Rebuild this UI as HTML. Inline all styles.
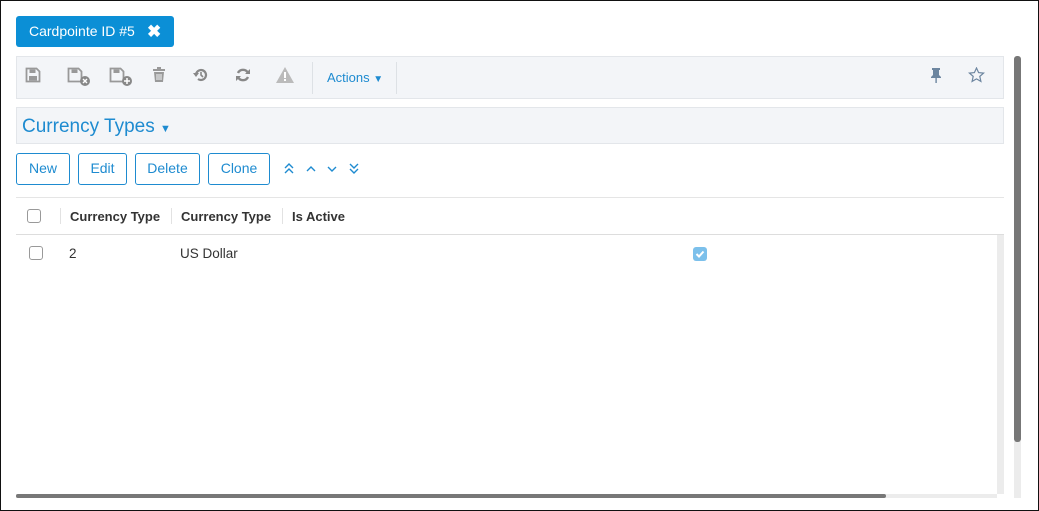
<!DOCTYPE html>
<html><head><meta charset="utf-8"><style>
*{box-sizing:border-box;margin:0;padding:0}
body{width:1039px;height:511px;background:#fff;font-family:"Liberation Sans",Arial,sans-serif;position:relative;overflow:hidden}
.frame{position:absolute;left:0;top:0;width:1039px;height:511px;border:1px solid #111}
.a{position:absolute}
.tab{left:16px;top:16px;width:158px;height:31px;background:#0b8fd6;border-radius:3px;color:#fff;font-size:14px;line-height:31px;padding-left:13px}
.tab span{position:absolute;left:131px;top:0;font-weight:bold;font-size:17px}
.bar{left:16px;top:56px;width:988px;height:43px;background:#f3f5f8;border:1px solid #e3e6ea}
.ico{position:absolute;top:67px}
.sep{position:absolute;top:62px;width:1px;height:32px;background:#dde1e5}
.act{left:327px;top:70px;color:#1e8bd0;font-size:13px}
.hdr{left:16px;top:107px;width:988px;height:37px;background:#f3f5f8;border:1px solid #e3e6ea}
.title{left:22px;top:116px;color:#1e8bd0;font-size:19px}
.btn{position:absolute;top:153px;height:32px;border:1px solid #1e8bd0;border-radius:3px;color:#1e8bd0;font-size:14px;line-height:29px;text-align:center;background:#fff}
.th{position:absolute;top:209px;font-size:13px;font-weight:bold;color:#333}
.td{position:absolute;top:246px;font-size:13.5px;color:#333}
.cb{position:absolute;width:14px;height:14px;border:1px solid #999;border-radius:3px;background:#fff}
.vs{position:absolute;width:1px;height:16px;top:208px;background:#e2e2e2}
</style></head><body>
<div class="frame"></div>
<div class="a tab">Cardpointe ID #5<span>✖</span></div>
<div class="a bar"></div>
<svg class="ico" style="left:25px" width="16" height="16" viewBox="0 0 16 16"><path d="M1.5 1.5h10l3 3v10h-13z" fill="none" stroke="#999" stroke-width="1.8"/><rect x="4.5" y="2.5" width="6" height="3.5" fill="#999"/><rect x="4" y="9" width="8" height="4.5" fill="#999"/></svg>
<svg class="ico" style="left:67px" width="24" height="20" viewBox="0 0 24 20"><path d="M1.5 1.5h10l3 3v10h-13z" fill="none" stroke="#999" stroke-width="1.8"/><rect x="4.5" y="2.5" width="6" height="3.5" fill="#999"/><circle cx="18" cy="14" r="5" fill="#888"/><path d="M16 12l4 4M20 12l-4 4" stroke="#fff" stroke-width="1.4"/></svg>
<svg class="ico" style="left:109px" width="24" height="20" viewBox="0 0 24 20"><path d="M1.5 1.5h10l3 3v10h-13z" fill="none" stroke="#999" stroke-width="1.8"/><rect x="4.5" y="2.5" width="6" height="3.5" fill="#999"/><circle cx="18" cy="14" r="5" fill="#888"/><path d="M18 11v6M15 14h6" stroke="#fff" stroke-width="1.5"/></svg>
<svg class="ico" style="left:152px" width="14" height="16" viewBox="0 0 14 16"><rect x="1" y="2" width="12" height="2" fill="#999"/><rect x="5" y="0" width="4" height="2" fill="#999"/><path d="M2 5h10l-1 10H3z" fill="#999"/><path d="M5 7v6M7 7v6M9 7v6" stroke="#f3f5f8" stroke-width="1"/></svg>
<svg class="ico" style="left:193px" width="16" height="16" viewBox="0 0 16 16"><path d="M3 8a5 5 0 1 1 2 4" fill="none" stroke="#888" stroke-width="2.2"/><path d="M0 6l3 4 3-4z" fill="#888"/><path d="M8 5v3l2 2" stroke="#888" stroke-width="1.6" fill="none"/></svg>
<svg class="ico" style="left:235px" width="16" height="16" viewBox="0 0 16 16"><path d="M13 6a5.5 5.5 0 0 0-10 0M3 10a5.5 5.5 0 0 0 10 0" fill="none" stroke="#888" stroke-width="2.4"/><path d="M15 2v5h-5zM1 14V9h5z" fill="#888"/></svg>
<svg class="ico" style="left:276px" width="18" height="16" viewBox="0 0 18 16"><path d="M9 0L18 16H0z" fill="#bbb"/><rect x="8" y="5" width="2" height="6" fill="#fff"/><rect x="8" y="12" width="2" height="2" fill="#fff"/></svg>
<div class="sep" style="left:312px"></div>
<div class="a act">Actions <span style="font-size:10px">▼</span></div>
<div class="sep" style="left:396px"></div>
<svg class="ico" style="left:929px" width="14" height="16" viewBox="0 0 14 16"><path d="M3 1h8v2h-1v5l2 2v1H2v-1l2-2V3H3z" fill="#6d86a0"/><rect x="6.4" y="11" width="1.4" height="5" fill="#6d86a0"/></svg>
<svg class="ico" style="left:968px" width="17" height="16" viewBox="0 0 17 16"><path d="M8.5 1l2.1 4.6 5 .5-3.8 3.3 1.1 5L8.5 11.9 4.1 14.4l1.1-5L1.4 6.1l5-.5z" fill="none" stroke="#6d86a0" stroke-width="1.2"/></svg>
<div class="a hdr"></div>
<div class="a title">Currency Types <span style="font-size:11px">▼</span></div>
<div class="btn" style="left:16px;width:54px">New</div>
<div class="btn" style="left:78px;width:49px">Edit</div>
<div class="btn" style="left:135px;width:65px">Delete</div>
<div class="btn" style="left:208px;width:62px">Clone</div>
<svg class="a" style="left:282px;top:162px" width="82" height="14" viewBox="0 0 82 14"><g fill="none" stroke="#1e8bd0" stroke-width="1.4"><path d="M3 6l4-4 4 4M3 11l4-4 4 4"/><path d="M25 9l4-4 4 4"/><path d="M46 5l4 4 4-4"/><path d="M68 2l4 4 4-4M68 7l4 4 4-4"/></g></svg>
<div class="a" style="left:16px;top:197px;width:988px;height:1px;background:#e5e5e5"></div>
<div class="a" style="left:16px;top:234px;width:988px;height:1px;background:#ddd"></div>
<div class="cb" style="left:27px;top:209px"></div>
<div class="vs" style="left:60px"></div><div class="vs" style="left:171px"></div><div class="vs" style="left:282px"></div>
<div class="th" style="left:70px">Currency Type</div>
<div class="th" style="left:181px">Currency Type</div>
<div class="th" style="left:292px">Is Active</div>
<div class="cb" style="left:29px;top:246px"></div>
<div class="td" style="left:69px">2</div>
<div class="td" style="left:180px">US Dollar</div>
<div class="a" style="left:693px;top:247px;width:14px;height:14px;background:#7cc0eb;border-radius:3px"><svg width="14" height="14" viewBox="0 0 14 14"><path d="M3.5 7l2.5 2.5 4.5-5" fill="none" stroke="#fff" stroke-width="2"/></svg></div>
<div class="a" style="left:997px;top:235px;width:7px;height:259px;background:#ececec"></div>
<div class="a" style="left:16px;top:494px;width:981px;height:4px;background:#ececec"></div>
<div class="a" style="left:16px;top:494px;width:870px;height:4px;background:#777;border-radius:2px"></div>
<div class="a" style="left:1014px;top:441px;width:7px;height:57px;background:#ececec"></div>
<div class="a" style="left:1014px;top:56px;width:7px;height:386px;background:#777;border-radius:3px"></div>
</body></html>
